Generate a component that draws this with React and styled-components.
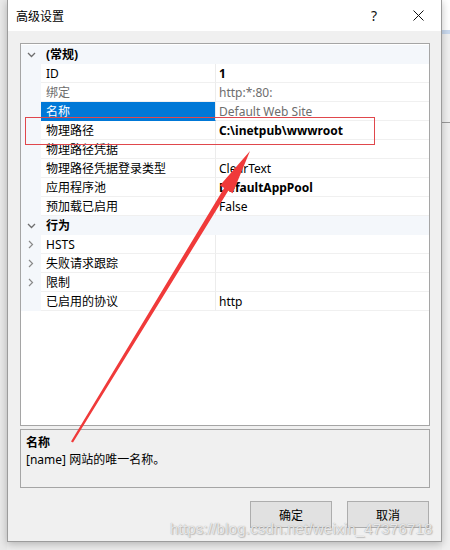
import React from "react";
import styled, { createGlobalStyle } from "styled-components";

const GlobalStyle = createGlobalStyle`
  body {
    margin: 0;
    background: #eeeeee;
    font-family: "Noto Sans", "Noto Sans CJK SC", sans-serif;
  }
`;

const rows = [
  { cat: true, label: "(常规)" },
  { label: "ID", value: "1", bold: true },
  { label: "绑定", value: "http:*:80:", dim: true },
  { label: "名称", value: "Default Web Site", valueDim: true, selected: true },
  { label: "物理路径", value: "C:\\inetpub\\wwwroot", bold: true },
  { label: "物理路径凭据", value: "" },
  { label: "物理路径凭据登录类型", value: "ClearText" },
  { label: "应用程序池", value: "DefaultAppPool", bold: true },
  { label: "预加载已启用", value: "False" },
  { cat: true, label: "行为" },
  { label: "HSTS", expand: true },
  { label: "失败请求跟踪", expand: true },
  { label: "限制", expand: true },
  { label: "已启用的协议", value: "http" },
];

const Screen = styled.div`
  position: relative;
  width: 450px;
  height: 550px;
  overflow: hidden;
  display: flex;
  background: #ededed;
`;

const LeftStrip = styled.div`
  width: 7px;
  flex-shrink: 0;
  background: #e9e9e9;
`;

const RightStrip = styled.div`
  flex: 1;
  display: flex;
  flex-direction: column;
  background: #f0f0f0;
  .top {
    height: 30px;
    background: #fff;
    border-bottom: 4px solid #c9d9ee;
  }
  .line {
    margin-top: 88px;
    border-top: 1px solid #9a9a9a;
  }
`;

const Dialog = styled.div`
  width: 435px;
  height: 542px;
  flex-shrink: 0;
  box-sizing: border-box;
  border: 1px solid #9c9c9c;
  border-top: none;
  background: #f0f0f0;
  box-shadow: 0 2px 8px rgba(0, 0, 0, 0.25);
  display: flex;
  flex-direction: column;
  z-index: 1;
`;

const TitleBar = styled.div`
  height: 31px;
  background: #fff;
  display: flex;
  align-items: center;
  padding-left: 8px;
  font-size: 12px;
  color: #000;
`;

const Title = styled.div`
  flex: 1;
`;

const TitleButton = styled.div`
  width: ${(p) => p.w}px;
  display: flex;
  justify-content: center;
  font-size: 14px;
  color: #111;
`;

const Body = styled.div`
  flex: 1;
  display: flex;
  flex-direction: column;
  padding: 12px 11px 0 12px;
`;

const Grid = styled.div`
  height: 383px;
  box-sizing: border-box;
  border: 1px solid #a5a5a5;
  background: #fff;
  padding-top: 1px;
  font-size: 12px;
`;

const Row = styled.div`
  display: grid;
  grid-template-columns: 20px 175px 1fr;
  height: 19px;
  background: ${(p) => (p.cat ? "#f4f7fb" : "#fff")};
`;

const Gutter = styled.div`
  background: #f4f7fb;
  display: flex;
  align-items: center;
  justify-content: center;
`;

const Label = styled.div`
  padding-left: 5px;
  line-height: 19px;
  white-space: nowrap;
  font-weight: ${(p) => (p.cat ? 700 : 400)};
  color: ${(p) => (p.selected ? "#fff" : p.dim ? "#6d6d6d" : "#000")};
  background: ${(p) => (p.selected ? "#0078d7" : "transparent")};
  border-bottom: 1px solid ${(p) => (p.cat ? "transparent" : p.selected ? "#0078d7" : "#f0f0f0")};
  border-right: 1px solid ${(p) => (p.cat ? "transparent" : "#ececec")};
  grid-column: ${(p) => (p.cat ? "2 / 4" : "auto")};
  box-sizing: border-box;
  height: 19px;
`;

const Value = styled.div`
  padding-left: 3px;
  line-height: 19px;
  white-space: nowrap;
  font-weight: ${(p) => (p.bold ? 700 : 400)};
  color: ${(p) => (p.dim ? "#6d6d6d" : "#000")};
  border-bottom: 1px solid #f0f0f0;
  box-sizing: border-box;
  height: 19px;
`;

const Description = styled.div`
  margin-top: 3px;
  height: 59px;
  box-sizing: border-box;
  border: 1px solid #a5a5a5;
  padding: 4px 5px;
  font-size: 12px;
  line-height: 17px;
  color: #000;
  strong {
    display: block;
    font-weight: 700;
  }
`;

const Buttons = styled.div`
  display: flex;
  justify-content: flex-end;
  gap: 15px;
  margin-top: 13px;
  padding-right: 1px;
`;

const Button = styled.div`
  width: 82px;
  height: 27px;
  box-sizing: border-box;
  border: 1px solid #adadad;
  background: #e1e1e1;
  display: flex;
  align-items: center;
  justify-content: center;
  font-size: 12px;
  color: #000;
`;

const Overlay = styled.svg`
  position: absolute;
  left: 0;
  top: 0;
  pointer-events: none;
  z-index: 2;
`;

const Watermark = styled.div`
  position: absolute;
  left: 170px;
  top: 520px;
  z-index: 3;
  font-family: "Liberation Sans", sans-serif;
  font-size: 15px;
  letter-spacing: 0.2px;
  color: rgba(255, 255, 255, 0.75);
  text-shadow: 0 0 1px rgba(120, 120, 120, 0.7), 1px 1px 1px rgba(150, 150, 150, 0.5);
  white-space: nowrap;
`;

const ChevronDown = () => (
  <svg width="9" height="6" viewBox="0 0 9 6">
    <path d="M1 1 L4.5 4.5 L8 1" fill="none" stroke="#6e6e6e" strokeWidth="1.3" />
  </svg>
);

const ChevronRight = () => (
  <svg width="6" height="9" viewBox="0 0 6 9">
    <path d="M1 1 L4.5 4.5 L1 8" fill="none" stroke="#8a8a8a" strokeWidth="1.2" />
  </svg>
);

const CloseIcon = () => (
  <svg width="11" height="11" viewBox="0 0 11 11">
    <path d="M0.5 0.5 L10.5 10.5 M10.5 0.5 L0.5 10.5" stroke="#111" strokeWidth="1" />
  </svg>
);

const PropertyRow = ({ row }) => {
  if (row.cat) {
    return (
      <Row cat>
        <Gutter>
          <ChevronDown />
        </Gutter>
        <Label cat>{row.label}</Label>
      </Row>
    );
  }
  return (
    <Row>
      <Gutter>{row.expand && <ChevronRight />}</Gutter>
      <Label selected={row.selected} dim={row.dim}>
        {row.label}
      </Label>
      <Value bold={row.bold} dim={row.dim || row.valueDim}>
        {row.value}
      </Value>
    </Row>
  );
};

const App = () => {
  return (
    <>
      <GlobalStyle />
      <Screen>
        <LeftStrip />
        <Dialog>
          <TitleBar>
            <Title>高级设置</Title>
            <TitleButton w={42}>?</TitleButton>
            <TitleButton w={46}>
              <CloseIcon />
            </TitleButton>
          </TitleBar>
          <Body>
            <Grid>
              {rows.map((row) => (
                <PropertyRow row={row} key={row.label} />
              ))}
            </Grid>
            <Description>
              <strong>名称</strong>
              [name] 网站的唯一名称。
            </Description>
            <Buttons>
              <Button>确定</Button>
              <Button>取消</Button>
            </Buttons>
          </Body>
        </Dialog>
        <RightStrip>
          <div className="top" />
          <div className="line" />
        </RightStrip>
        <Overlay width="450" height="550" viewBox="0 0 450 550">
          <rect x="25.5" y="117.5" width="349" height="27" fill="none" stroke="#e0474c" strokeWidth="1" />
          <polygon
            points="250,151 232.6,193.2 228.4,190.6 73,442.5 71,441.5 224.2,187.9 219.9,185.4"
            fill="#f03a3a"
          />
        </Overlay>
        <Watermark>https://blog.csdn.net/weixin_47376718</Watermark>
      </Screen>
    </>
  );
};

export default App;
